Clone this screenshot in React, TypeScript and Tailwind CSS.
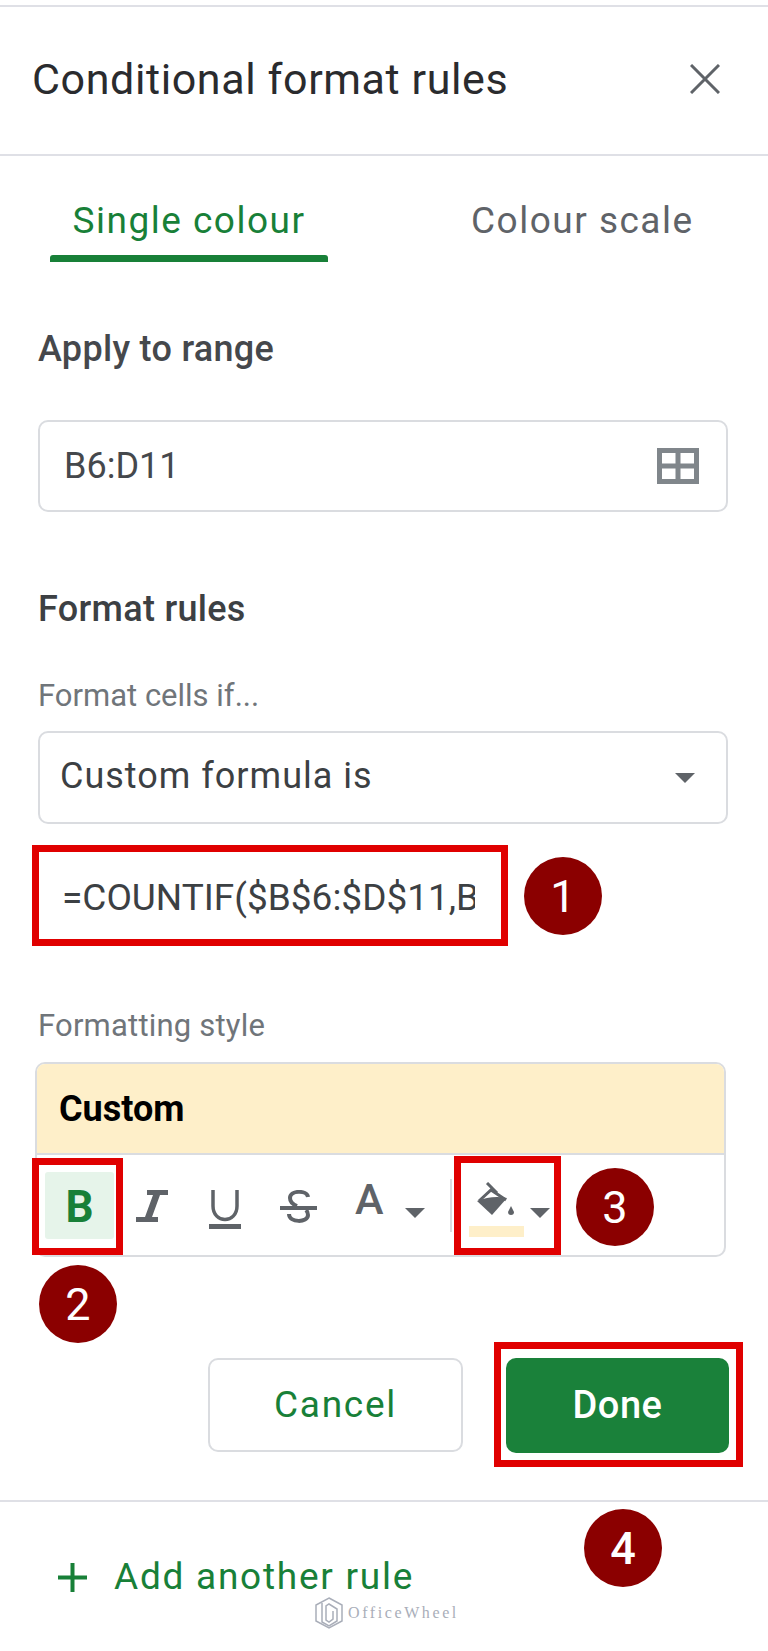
import React from 'react';

const Badge = ({ n, className }: { n: number; className: string }) => (
  <div className={`absolute w-[78px] h-[78px] rounded-full bg-[#8b0000] text-white flex items-center justify-center text-[45px] leading-none ${className}`}>
    {n}
  </div>
);

const Caret = () => (
  <svg width="20" height="10" viewBox="0 0 20 10" className="shrink-0">
    <path d="M0 0h20L10 10z" fill="#5f6368" />
  </svg>
);

export default function App() {
  return (
    <div className="relative w-[768px] h-[1651px] bg-white overflow-hidden font-['Roboto',sans-serif] pt-[5px]">
      <div className="h-[2px] bg-[#dfe0e6]" />

      {/* header */}
      <div className="h-[149px] flex items-center justify-between pl-[32px] pr-[48px] pb-[3px] border-b-2 border-[#dfe0e6]">
        <h1 className="text-[43px] leading-none tracking-[0.6px] text-[#2a2b2e]">Conditional format rules</h1>
        <svg width="30" height="30" viewBox="0 0 30 30" fill="none" stroke="#5f6368" strokeWidth="3" className="-mt-[1px]">
          <path d="M1 1l28 28M29 1L1 29" />
        </svg>
      </div>

      {/* tabs */}
      <div className="flex h-[106px] pl-[50px] pt-[40px]">
        <div className="w-[278px] h-[66px] relative text-center">
          <span className="text-[37px] leading-[50px] tracking-[1.5px] text-[#188038]">Single colour</span>
          <div className="absolute left-0 right-0 bottom-0 h-[7px] rounded-t-[3px] bg-[#188038]" />
        </div>
        <span className="ml-[143px] text-[37px] leading-[50px] tracking-[1.5px] text-[#5f6368]">Colour scale</span>
      </div>

      <div className="pl-[38px] pr-[40px]">
        <div className="mt-[62px] text-[36px] leading-[50px] tracking-[0.3px] font-medium text-[#45484c]">Apply to range</div>
        <div className="mt-[46px] h-[92px] border-2 border-[#dadce0] rounded-[10px] flex items-center justify-between pl-[24px] pr-[27px]">
          <span className="text-[36px] text-[#45484c]">B6:D11</span>
          <svg width="42" height="36" viewBox="0 0 42 36" fill="none" stroke="#80868b" strokeWidth="5">
            <path d="M2.5 2.5h37v31h-37zM21 2.5v31M2.5 18h37" />
          </svg>
        </div>

        <div className="mt-[72px] text-[36px] leading-[50px] tracking-[0.3px] font-medium text-[#3c4043]">Format rules</div>
        <div className="mt-[37px] text-[31px] leading-[50px] text-[#70757a]">Format cells if...</div>
        <div className="mt-[10px] h-[93px] border-2 border-[#dadce0] rounded-[10px] flex items-center justify-between pl-[20px] pr-[31px] pb-[4px]">
          <span className="text-[36px] tracking-[1px] text-[#3c4043]">Custom formula is</span>
          <div className="mt-[4px]"><Caret /></div>
        </div>

        <div className="mt-[27px] h-[94px] w-[437px] overflow-hidden flex items-center pl-[24px]">
          <span className="text-[37px] whitespace-nowrap text-[#3c4043]">=COUNTIF($B$6:$D$11,B6)&gt;1</span>
        </div>

        <div className="mt-[56px] text-[31px] leading-[50px] tracking-[0.2px] text-[#70757a]">Formatting style</div>
      </div>

      {/* formatting style box */}
      <div className="ml-[35px] mt-[11px] w-[691px] h-[195px] border-2 border-[#dadce0] rounded-[10px] overflow-hidden">
        <div className="h-[91px] bg-[#feefc9] flex items-center pl-[22px] border-b-2 border-[#dadce0]">
          <span className="text-[36px] font-bold text-black">Custom</span>
        </div>
        <div className="flex items-center h-[100px]">
          <div className="ml-[8px] w-[69px] h-[67px] rounded-[3px] bg-[#e6f4ea] flex items-center justify-center pt-[3px] text-[44px] font-bold text-[#188038] leading-none">B</div>
          <svg className="ml-[22px] mt-[2px]" width="32" height="32" viewBox="0 0 32 32" fill="#5f6368">
            <path d="M11 0h21v5h-8l-8 22h6v5H0v-5h9l8-22h-6z" />
          </svg>
          <svg className="ml-[41px] mt-[8px]" width="32" height="39" viewBox="0 0 32 39" fill="none" stroke="#5f6368">
            <path d="M4 0v16c0 18 24 18 24 0V0" strokeWidth="3.5" />
            <path d="M0 36.5h32" strokeWidth="5" />
          </svg>
          <svg className="ml-[39px] mt-[2px]" width="37" height="33" viewBox="0 0 37 33" fill="none" stroke="#5f6368" strokeWidth="4">
            <path d="M28 7c-1-7-18-7-18 1 0 4 2 6 7 8M0 18h37M9 24c0 9 19 9 19 1 0-2 0-3-2-5" />
          </svg>
          <span className="ml-[38px] text-[43px] font-medium leading-none text-[#5f6368] -mt-[12px]">A</span>
          <div className="ml-[21px] mt-[15px]"><Caret /></div>
          <div className="ml-[25px] w-[2px] h-[53px] bg-[#dadce0]" />
          <div className="ml-[17px] mt-[9px] relative w-[55px] h-[55px]">
            <svg width="38" height="34" viewBox="0 0 38 34" className="ml-[8px]">
              <path d="M10 1l10 10" fill="none" stroke="#5f6368" strokeWidth="3" />
              <path d="M2 19L14 8l15 10" fill="none" stroke="#5f6368" strokeWidth="3" />
              <path d="M0 19q15-6 30-3L15 33z" fill="#5f6368" />
              <path d="M34 24l-3 6a3 3 0 006 0z" fill="#5f6368" />
            </svg>
            <div className="absolute left-0 right-0 bottom-0 h-[11px] bg-[#feefc9]" />
          </div>
          <div className="ml-[6px] mt-[15px]"><Caret /></div>
        </div>
      </div>

      {/* buttons */}
      <div className="mt-[101px] pl-[208px] flex gap-[43px]">
        <div className="w-[255px] h-[94px] border-2 border-[#dadce0] rounded-[10px] flex items-center justify-center text-[37px] tracking-[1.7px] text-[#188038]">Cancel</div>
        <div className="w-[223px] h-[95px] rounded-[10px] bg-[#1a813a] flex items-center justify-center text-[38px] tracking-[0.5px] font-medium text-white">Done</div>
      </div>

      <div className="mt-[47px] h-[2px] bg-[#dfe0e6]" />

      {/* add rule */}
      <div className="mt-[50px] pl-[58px] flex items-center">
        <svg width="29" height="29" viewBox="0 0 29 29" fill="none" stroke="#188038" strokeWidth="4">
          <path d="M14.5 0v29M0 14.5h29" />
        </svg>
        <span className="ml-[27px] text-[37px] leading-[50px] tracking-[1.75px] text-[#188038]">Add another rule</span>
      </div>

      {/* annotations */}
      <div className="absolute left-[32px] top-[845px] w-[476px] h-[101px] border-[7px] border-[#e00000]" />
      <div className="absolute left-[32px] top-[1158px] w-[91px] h-[97px] border-[7px] border-[#e00000]" />
      <div className="absolute left-[454px] top-[1156px] w-[107px] h-[99px] border-[7px] border-[#e00000]" />
      <div className="absolute left-[494px] top-[1342px] w-[249px] h-[125px] border-[7px] border-[#e00000]" />
      <Badge n={1} className="left-[524px] top-[857px]" />
      <Badge n={2} className="left-[39px] top-[1265px]" />
      <Badge n={3} className="left-[576px] top-[1168px]" />
      <Badge n={4} className="left-[584px] top-[1509px] font-medium" />

      {/* watermark */}
      <div className="absolute left-[314px] top-[1597px] flex items-center">
        <svg width="30" height="32" viewBox="0 0 30 32" fill="none" stroke="#a9aeb9" strokeWidth="1.5">
          <path d="M15 1l13 7v16l-13 7-13-7V8z" />
          <path d="M8 6v19l7 4 8-5V12l-8-5-3 2v14l3 2 4-3V14" />
        </svg>
        <span className="ml-[4px] font-['Liberation_Serif',serif] text-[16px] tracking-[2.6px] text-[#a9aeb9]">OfficeWheel</span>
      </div>
    </div>
  );
}
